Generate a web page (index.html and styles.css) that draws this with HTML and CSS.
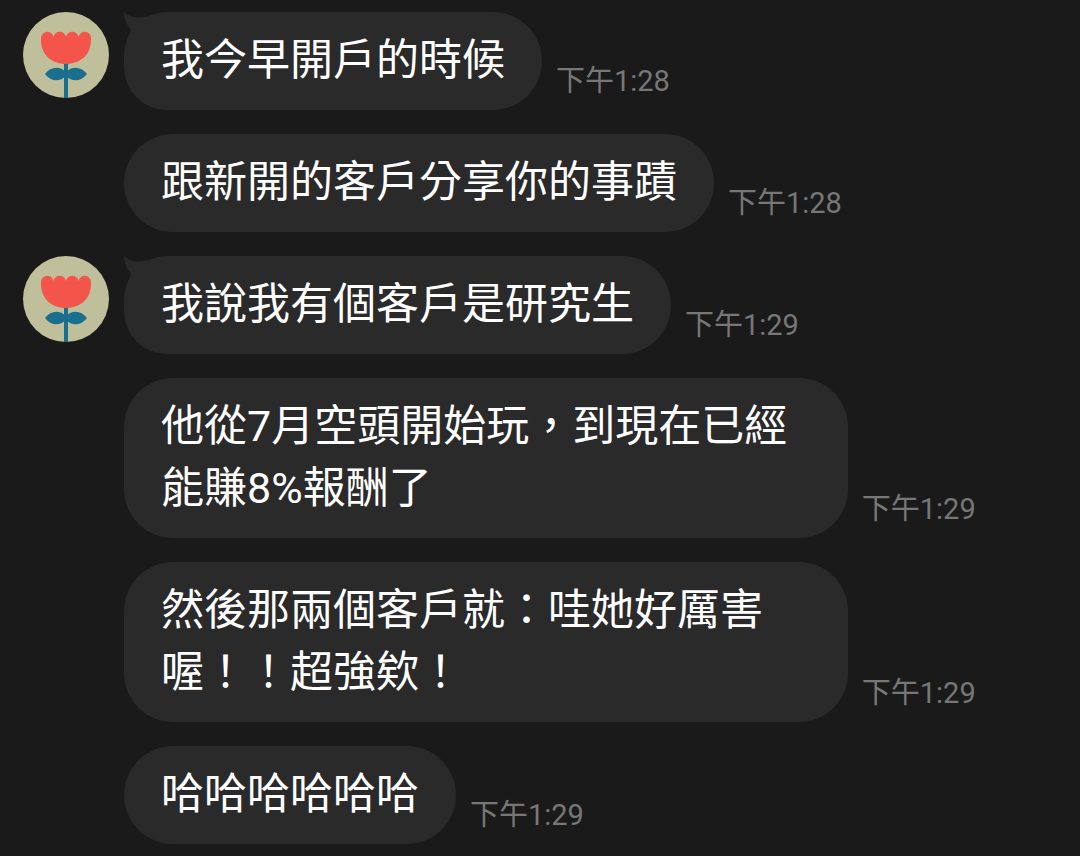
FILE: index.html
```
<!DOCTYPE html>
<html lang="zh-Hant">
<head>
    <meta charset="UTF-8">
    <meta name="viewport" content="width=device-width, initial-scale=1.0">
    <title>聊天</title>
    <link rel="stylesheet" href="styles.css">
</head>
<body>
    <!-- Tulip avatar, shared by the message groups -->
    <svg class="sprite" aria-hidden="true">
        <symbol id="tulip" viewBox="0 0 86 86">
            <circle cx="43" cy="43" r="43" fill="#bfbf9c" />
            <path d="M41 50h4v36h-4z" fill="#1b6f8e" />
            <path d="M43 60C37 54 28 54 22 62C28 70 37 70 43 64C49 70 58 70 64 62C58 54 49 54 43 60Z" fill="#1b6f8e" />
            <path d="M18 28A6.3 6.6 0 0 1 30.5 25A6.3 6 0 0 1 43 25A6.3 6 0 0 1 55.5 25A6.3 6.6 0 0 1 68 28C68 43 57 52 43 52S18 43 18 28Z" fill="#f4554a" />
        </symbol>
    </svg>

    <main class="chat">
        <div class="message">
            <svg class="avatar" role="img" aria-label="頭像"><use href="#tulip" /></svg>
            <p class="bubble tail">我今早開戶的時候</p>
            <time class="time">下午1:28</time>
        </div>
        <div class="message">
            <p class="bubble">跟新開的客戶分享你的事蹟</p>
            <time class="time">下午1:28</time>
        </div>
        <div class="message">
            <svg class="avatar" role="img" aria-label="頭像"><use href="#tulip" /></svg>
            <p class="bubble tail">我說我有個客戶是研究生</p>
            <time class="time">下午1:29</time>
        </div>
        <div class="message">
            <p class="bubble">他從7月空頭開始玩，到現在已經能賺8%報酬了</p>
            <time class="time">下午1:29</time>
        </div>
        <div class="message">
            <p class="bubble">然後那兩個客戶就：哇她好厲害喔！！超強欸！</p>
            <time class="time">下午1:29</time>
        </div>
        <div class="message">
            <p class="bubble">哈哈哈哈哈哈</p>
            <time class="time">下午1:29</time>
        </div>
    </main>
</body>
</html>
```
FILE: styles.css
```
* {
    box-sizing: border-box;
}
body {
    margin: 0;
    background-color: #1a1a1a;
    color: #fff;
    font-family: Roboto, "Noto Sans CJK TC", sans-serif;
}
.sprite {
    display: none;
}
.chat {
    display: flex;
    flex-direction: column;
    gap: 24px;
    padding: 12px 23px;
}
.message {
    display: grid;
    grid-template-columns: 86px fit-content(70%) auto;
    column-gap: 15px;
    justify-content: start;
}
.avatar {
    grid-column: 1;
    width: 86px;
    height: 86px;
}
.bubble {
    position: relative;
    grid-column: 2;
    margin: 0;
    padding: 17px 37px 19px;
    border-radius: 49px;
    background-color: #2a2a2a;
    font-size: 43px;
    line-height: 62px;
}
.tail {
    border-top-left-radius: 43px;
    border-bottom-left-radius: 43px;
}
.tail::before {
    content: "";
    position: absolute;
    top: 0;
    left: 0;
    width: 30px;
    height: 30px;
    background-color: #2a2a2a;
    clip-path: path("M0 0C5 5 13 7 24 4L28 14L5 23L7 18C3 13 0 7 0 0Z");
}
.time {
    grid-column: 3;
    align-self: end;
    margin-left: -1px;
    padding-bottom: 10px;
    color: #777;
    font-size: 29px;
    line-height: 38px;
}
```
